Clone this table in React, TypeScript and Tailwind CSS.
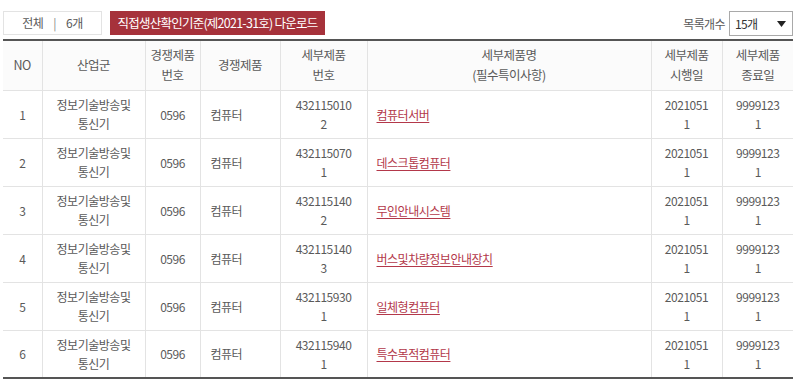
import React from "react";

const rows = [
  { no: 1, code: ["432115010", "2"], name: "컴퓨터서버" },
  { no: 2, code: ["432115070", "1"], name: "데스크톱컴퓨터" },
  { no: 3, code: ["432115140", "2"], name: "무인안내시스템" },
  { no: 4, code: ["432115140", "3"], name: "버스및차량정보안내장치" },
  { no: 5, code: ["432115930", "1"], name: "일체형컴퓨터" },
  { no: 6, code: ["432115940", "1"], name: "특수목적컴퓨터" },
];

const font = { fontFamily: '"Noto Sans CJK KR", "Noto Sans", sans-serif' };

export default function App() {
  return (
    <div className="bg-white w-[800px] h-[386px] pt-[11px] pl-[3px] text-[#5a5a5a]" style={font}>
      <div className="w-[790px] flex items-start justify-between h-[25px]">
        <div className="flex items-center gap-[8px]">
          <div className="w-[99px] h-[24px] border border-[#e3e3e3] flex items-center justify-center text-[12px] text-[#5a5a5a] tracking-[-0.04em]">
            <span>전체</span>
            <span className="mx-[10px] text-[#888]">|</span>
            <span>6개</span>
          </div>
          <div className="w-[215px] h-[24px] bg-[#a6323b] text-white text-[12.5px] flex items-center justify-center tracking-[-0.06em]">
            직접생산확인기준(제2021-31호) 다운로드
          </div>
        </div>
        <div className="flex items-center gap-[4px]">
          <span className="text-[12px] text-[#5a5a5a] tracking-[-0.05em]">목록개수</span>
          <div className="w-[64px] h-[25px] border border-[#a9a9a9] flex items-center justify-between pl-[5px] pr-[6px] text-[12px] text-[#333]">
            <span className="tracking-[-0.05em]">15개</span>
            <svg width="9" height="6" viewBox="0 0 9 6"><path d="M0 0 L9 0 L4.5 6 Z" fill="#222" /></svg>
          </div>
        </div>
      </div>
      <table className="mt-[3px] w-[790px] table-fixed border-collapse text-[12px] tracking-[-0.04em]">
        <colgroup>
          <col className="w-[39px]" />
          <col className="w-[103px]" />
          <col className="w-[55px]" />
          <col className="w-[80px]" />
          <col className="w-[87px]" />
          <col className="w-[284px]" />
          <col className="w-[71px]" />
          <col className="w-[71px]" />
        </colgroup>
        <thead>
          <tr className="h-[50px] border-t-2 border-t-[#555] bg-[#fbfbfb] text-[#5a5a5a] text-[12.5px] leading-[20px]">
            <th className="font-normal border-b border-[#e3e3e3]">NO</th>
            <th className="font-normal border-b border-l border-[#e3e3e3]">산업군</th>
            <th className="font-normal border-b border-l border-[#e3e3e3]">경쟁제품<br />번호</th>
            <th className="font-normal border-b border-l border-[#e3e3e3]">경쟁제품</th>
            <th className="font-normal border-b border-l border-[#e3e3e3]">세부제품<br />번호</th>
            <th className="font-normal border-b border-l border-[#e3e3e3]">세부제품명<br />(필수특이사항)</th>
            <th className="font-normal border-b border-l border-[#e3e3e3]">세부제품<br />시행일</th>
            <th className="font-normal border-b border-l border-[#e3e3e3]">세부제품<br />종료일</th>
          </tr>
        </thead>
        <tbody>
          {rows.map((r, i) => (
            <tr
              key={r.no}
              className={`h-[48px] leading-[19px] ${i === rows.length - 1 ? "border-b-2 border-b-[#555]" : "border-b border-[#e3e3e3]"}`}
            >
              <td className="text-center">{r.no}</td>
              <td className="text-center border-l border-[#e3e3e3]">정보기술방송및<br />통신기</td>
              <td className="text-center border-l border-[#e3e3e3]">0596</td>
              <td className="text-left pl-[10px] border-l border-[#e3e3e3]">컴퓨터</td>
              <td className="text-center border-l border-[#e3e3e3]">{r.code[0]}<br />{r.code[1]}</td>
              <td className="text-left pl-[9px] border-l border-[#e3e3e3]">
                <span className="text-[#b3384a] underline underline-offset-[2px] decoration-[1px]">{r.name}</span>
              </td>
              <td className="text-center border-l border-[#e3e3e3]">2021051<br />1</td>
              <td className="text-center border-l border-[#e3e3e3]">9999123<br />1</td>
            </tr>
          ))}
        </tbody>
      </table>
    </div>
  );
}
